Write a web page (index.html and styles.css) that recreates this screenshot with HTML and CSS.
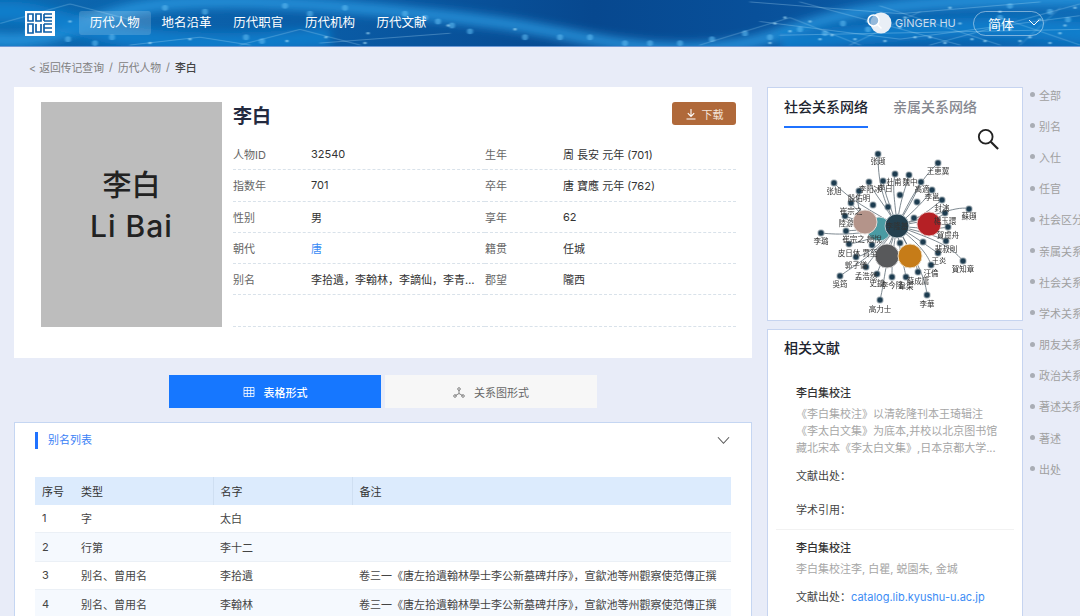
FILE: index.html
```html
<!DOCTYPE html>
<html lang="zh-CN">
<head>
    <meta charset="UTF-8">
    <meta name="viewport" content="width=device-width, initial-scale=1.0">
    <title>李白 - 历代人物</title>
    <link rel="stylesheet" href="styles.css">
</head>

<body>
    <header class="top-bar">
        <!-- network backdrop of the banner -->
        <svg class="top-bar-bg" viewBox="0 0 1080 47" preserveAspectRatio="none" aria-hidden="true">
            <defs>
                <filter id="soft" x="-10%" y="-200%" width="120%" height="500%"><feGaussianBlur stdDeviation="5"></feGaussianBlur></filter>
                <filter id="soft-small" x="-10%" y="-10%" width="120%" height="120%"><feGaussianBlur stdDeviation="0.8"></feGaussianBlur></filter>
            </defs>
            <path filter="url(#soft)" fill="none" stroke="#2b9de6" stroke-width="12" stroke-opacity=".8"
                d="M-10 40 C60 48 90 14 150 6 S300 2 400 12 S520 26 570 36 S700 60 770 38 S860 0 1090 -2"></path>
            <path filter="url(#soft)" fill="none" stroke="#1383d2" stroke-width="20" stroke-opacity=".8"
                d="M-10 12 C40 8 60 26 120 36 S240 46 330 38 M780 44 C860 36 960 20 1090 34"></path>
            <g filter="url(#soft-small)" fill="none" stroke-linecap="round">
                <path stroke="#5ab8f0" stroke-opacity=".6" stroke-width="6"
                    d="M28 32h0 M50 24h0 M68 40h0 M95 44h0 M112 38h0 M165 8h0 M205 12h0 M246 38h0 M262 42h0 M285 6h0 M310 14h0 M345 8h0 M405 14h0 M425 18h0 M438 22h0 M452 26h0 M470 32h0 M525 38h0 M560 38h0 M590 38h0 M625 44h0 M650 44h0 M680 44h0 M712 40h0 M745 34h0 M770 38h0 M800 30h0 M825 34h0 M843 24h0 M868 30h0 M1010 6h0 M1050 12h0 M1000 18h0 M1068 20h0"></path>
                <path stroke="#a3dcf8" stroke-opacity=".85" stroke-width="2.600"
                    d="M70 22h0 M150 44h0 M190 40h0 M287 42h0 M326 38h0 M368 34h0 M365 44h0 M448 26h0 M515 30h0 M770 44h0 M775 24h0 M785 18h0 M790 32h0 M810 22h0 M820 40h0 M832 36h0 M855 40h0 M868 22h0 M885 42h0 M900 28h0 M915 38h0 M930 38h0 M945 44h0 M960 24h0 M972 40h0 M985 42h0 M1010 30h0 M1030 38h0 M1050 44h0 M1065 26h0 M1000 12h0 M1040 20h0 M1075 8h0 M905 18h0 M950 8h0 M1020 42h0 M1060 34h0"></path>
                <path stroke="#b4e2fa" stroke-opacity=".45" stroke-width=".7"
                    d="M700 46 L790 18 L860 46 M760 22 L900 40 L1080 16 M800 2 L960 46 M880 6 L1000 46 M930 46 L1080 4 M1000 18 L1080 46 M750 2 L900 14 L1040 2 M780 36 L1080 30 M850 46 L920 12 M1020 46 L1060 8 M240 46 L300 30 L360 46 M130 46 L200 38 L250 46 M0 24 L70 4 L130 20 M320 44 L450 34"></path>
            </g>
        </svg>

        <svg class="logo" viewBox="0 0 30 25" aria-label="logo">
            <rect width="30" height="25" fill="#fff"></rect>
            <path fill="none" stroke="#0d5fa8" stroke-width="1.700"
                d="M3 3h5v7h-5z M11 3h5v7h-5z M3 13h5v9h-5z M11 13v8h5v-8 M19 3h8 M19 6.500h8 M19 10h8 M19 3v7 M19 13h8 M19 17h8 M19 13v8h8"></path>
        </svg>

        <nav class="main-nav">
            <a class="active">历代人物</a>
            <a>地名沿革</a>
            <a>历代职官</a>
            <a>历代机构</a>
            <a>历代文献</a>
        </nav>

        <div class="user-box">
            <svg class="avatar" viewBox="0 0 26 24">
                <circle cx="15" cy="12" r="10.500" fill="#e9eff6"></circle>
                <circle cx="7.500" cy="9.500" r="5.500" fill="#6fa3d0" fill-opacity=".7" stroke="#fff" stroke-width="1.500"></circle>
                <path d="M11.500 13.500l4 4" stroke="#fff" stroke-width="1.500"></path>
            </svg>
            <span class="user-name">GINGER HU</span>
            <div class="lang-btn">
                简体
                <svg viewBox="0 0 12 8"><path d="M1 1l5 5 5-5" fill="none" stroke="currentColor" stroke-width="1"></path></svg>
            </div>
        </div>
    </header>

    <div class="breadcrumb">
        <span>&lt; 返回传记查询</span><i>/</i><span>历代人物</span><i>/</i><b>李白</b>
    </div>

    <div class="page">
        <main class="left-col">
            <section class="profile">
                <div class="photo">
                    <div class="photo-cn">李白</div>
                    <div class="photo-en">Li Bai</div>
                </div>
                <div class="info">
                    <div class="info-head">
                        <h1>李白</h1>
                        <button class="download-btn">
                            <svg viewBox="0 0 12 12"><path d="M6 1v7M2.800 5.200L6 8.400l3.200-3.200M1.500 11h9" fill="none" stroke="#fff" stroke-width="1.100"></path></svg>
                            下载
                        </button>
                    </div>
                    <dl class="info-grid">
                        <div class="info-row"><dt>人物ID</dt><dd>32540</dd></div>
                        <div class="info-row"><dt>生年</dt><dd>周 長安 元年 (701)</dd></div>
                        <div class="info-row"><dt>指数年</dt><dd>701</dd></div>
                        <div class="info-row"><dt>卒年</dt><dd>唐 寶應 元年 (762)</dd></div>
                        <div class="info-row"><dt>性别</dt><dd>男</dd></div>
                        <div class="info-row"><dt>享年</dt><dd>62</dd></div>
                        <div class="info-row"><dt>朝代</dt><dd><a class="link">唐</a></dd></div>
                        <div class="info-row"><dt>籍贯</dt><dd>任城</dd></div>
                        <div class="info-row"><dt>别名</dt><dd>李拾遺，李翰林，李謫仙，李青蓮居士</dd></div>
                        <div class="info-row"><dt>郡望</dt><dd>隴西</dd></div>
                        <div class="info-row"></div>
                        <div class="info-row"></div>
                    </dl>
                </div>
            </section>

            <div class="view-tabs">
                <div class="view-tab active">
                    <svg viewBox="0 0 12 12"><path d="M1 1.500h10v9H1z M1 4.500h10 M1 7.500h10 M4.300 1.500v9 M7.700 1.500v9" fill="none" stroke="currentColor" stroke-width=".8"></path></svg>
                    表格形式
                </div>
                <div class="view-tab">
                    <svg viewBox="0 0 12 12"><path d="M6 4v3.500L2.500 9.500M6 7.500l3.500 2" fill="none" stroke="currentColor" stroke-width=".8"></path><circle cx="6" cy="3" r="1.300" fill="none" stroke="currentColor" stroke-width=".8"></circle><circle cx="2" cy="10" r="1.300" fill="none" stroke="currentColor" stroke-width=".8"></circle><circle cx="10" cy="10" r="1.300" fill="none" stroke="currentColor" stroke-width=".8"></circle></svg>
                    关系图形式
                </div>
            </div>

            <section class="alias-panel">
                <div class="panel-head">
                    <h2>别名列表</h2>
                    <svg viewBox="0 0 14 9"><path d="M1 1l6 6.500L13 1" fill="none" stroke="#555" stroke-width="1.100"></path></svg>
                </div>
                <table class="alias-table">
                    <thead>
                        <tr><th>序号</th><th>类型</th><th>名字</th><th>备注</th></tr>
                    </thead>
                    <tbody>
                        <tr><td>1</td><td>字</td><td>太白</td><td></td></tr>
                        <tr><td>2</td><td>行第</td><td>李十二</td><td></td></tr>
                        <tr><td>3</td><td>别名、曾用名</td><td>李拾遺</td><td>卷三一《唐左拾遺翰林學士李公新墓碑幷序》，宣歙池等州觀察使范傳正撰</td></tr>
                        <tr><td>4</td><td>别名、曾用名</td><td>李翰林</td><td>卷三一《唐左拾遺翰林學士李公新墓碑幷序》，宣歙池等州觀察使范傳正撰</td></tr>
                    </tbody>
                </table>
            </section>
        </main>

        <aside class="right-col">
            <section class="graph-card">
                <div class="graph-tabs">
                    <span class="active">社会关系网络</span>
                    <span>亲属关系网络</span>
                </div>
                <svg class="search-icon" viewBox="0 0 24 24"><circle cx="9.500" cy="9.500" r="7.500" fill="none" stroke="#222" stroke-width="2"></circle><path d="M15 15l8 8" stroke="#222" stroke-width="2.400"></path></svg>
                <svg class="graph" viewBox="0 0 250 195">
                    <path fill="none" stroke="#5d6b75" stroke-width=".8" d="M127 96C112 70 108 50 108 24M127 96C140 70 150 50 168 33M127 96C100 80 80 70 64 53M127 96C115 75 105 65 99 52M127 96C120 75 115 65 113 51M127 96C125 70 122 60 125 44M127 96C130 70 135 60 139 45M127 96C140 75 145 65 151 52M127 96C145 80 155 70 162 60M127 96C90 90 85 80 89 61M127 96C100 90 90 85 81 73M127 96C150 90 165 75 172 70M127 96C165 85 190 75 199 79M127 96C160 90 170 88 175 83M127 96C165 100 172 98 178 97M127 96C100 95 85 90 75 86M127 96C100 100 85 100 76 101M127 96C90 105 70 105 51 103M127 96C100 110 90 112 79 114M127 96C105 120 95 125 86 127M127 96C165 105 170 108 176 111M127 96C150 110 160 118 168 123M127 96C165 110 180 115 193 131M127 96C150 115 158 125 161 135M127 96C105 125 85 135 70 146M127 96C110 120 100 130 96 137M127 96C115 125 110 135 107 144M127 96C122 125 122 135 122 147M127 96C130 125 134 135 136 147M127 96C140 120 145 130 148 142M127 96C115 130 115 150 110 170M127 96C145 130 155 145 157 165"></path>
                    <g fill="#1d3c50" stroke="#8b99a3" stroke-opacity=".55" stroke-width="1.500">
                        <circle cx="108" cy="24" r="3"></circle><circle cx="168" cy="33" r="3"></circle><circle cx="64" cy="53" r="3"></circle><circle cx="99" cy="52" r="3"></circle><circle cx="113" cy="51" r="3"></circle><circle cx="125" cy="44" r="3"></circle><circle cx="139" cy="45" r="3"></circle><circle cx="151" cy="52" r="3"></circle><circle cx="162" cy="60" r="3"></circle><circle cx="89" cy="61" r="3"></circle><circle cx="81" cy="73" r="3"></circle><circle cx="172" cy="70" r="3"></circle><circle cx="199" cy="79" r="3"></circle><circle cx="175" cy="83" r="3"></circle><circle cx="178" cy="97" r="3"></circle><circle cx="75" cy="86" r="3"></circle><circle cx="76" cy="101" r="3"></circle><circle cx="51" cy="103" r="3"></circle><circle cx="79" cy="114" r="3"></circle><circle cx="86" cy="127" r="3"></circle><circle cx="176" cy="111" r="3"></circle><circle cx="168" cy="123" r="3"></circle><circle cx="193" cy="131" r="3"></circle><circle cx="161" cy="135" r="3"></circle><circle cx="70" cy="146" r="3"></circle><circle cx="96" cy="137" r="3"></circle><circle cx="107" cy="144" r="3"></circle><circle cx="122" cy="147" r="3"></circle><circle cx="136" cy="147" r="3"></circle><circle cx="148" cy="142" r="3"></circle><circle cx="110" cy="170" r="3"></circle><circle cx="157" cy="165" r="3"></circle><circle cx="130" cy="65" r="3"></circle><circle cx="147" cy="72" r="3"></circle><circle cx="118" cy="77" r="3"></circle><circle cx="103" cy="75" r="3"></circle><circle cx="144" cy="88" r="3"></circle><circle cx="153" cy="112" r="3"></circle><circle cx="102" cy="115" r="3"></circle><circle cx="130" cy="113" r="3"></circle>
                    </g>
                    <circle cx="109" cy="99" r="12" fill="#4a9ba3" stroke="#c9d8da"></circle>
                    <circle cx="95" cy="92" r="12" fill="#b4948a" stroke="#e4dad6"></circle>
                    <circle cx="127" cy="96" r="12" fill="#24404f" stroke="#bcc6cc"></circle>
                    <circle cx="159" cy="94" r="12" fill="#b52025" stroke="#e4c0c0"></circle>
                    <circle cx="117" cy="126" r="12" fill="#58595b" stroke="#cfcfd0"></circle>
                    <circle cx="140" cy="126" r="12" fill="#c67c18" stroke="#ecdcc2"></circle>
                    <g class="graph-labels">
                        <text x="108" y="34">张颋</text><text x="168" y="44">王恵翼</text><text x="64" y="64">张旭</text><text x="100" y="62">李阳冰</text><text x="115" y="61">李白</text><text x="124" y="55">杜甫</text><text x="140" y="55">魏中</text><text x="152" y="62">高適</text><text x="162" y="70">李邕</text><text x="89" y="71">殷佑明</text><text x="81" y="84">崔宗之</text><text x="172" y="81">封演</text><text x="199" y="89">蘇頲</text><text x="175" y="94">楊玉環</text><text x="178" y="108">賀虞舟</text><text x="76" y="96">陸游</text><text x="51" y="114">李璐</text><text x="92" y="112">崔宗之 趙悅</text><text x="79" y="126">皮日休</text><text x="100" y="126">賈至</text><text x="86" y="138">郭子儀</text><text x="176" y="122">裴叔則</text><text x="169" y="134">王炎</text><text x="193" y="142">賀知章</text><text x="161" y="146">汪倫</text><text x="70" y="157">吳筠</text><text x="96" y="149">孟浩然</text><text x="107" y="156">史鎮</text><text x="122" y="158">李今隆</text><text x="136" y="159">韋渠</text><text x="148" y="154">蘇成庸</text><text x="110" y="182">高力士</text><text x="157" y="177">李華</text><text x="127" y="99">李隆基</text>
                    </g>
                </svg>
            </section>

            <section class="docs-card">
                <h3>相关文献</h3>
                <div class="doc">
                    <h4>李白集校注</h4>
                    <p class="doc-desc">《李白集校注》以清乾隆刊本王琦辑注<br>《李太白文集》为底本,并校以北京图书馆<br>藏北宋本《李太白文集》,日本京都大学...</p>
                    <p class="doc-meta">文献出处：</p>
                    <p class="doc-meta">学术引用：</p>
                </div>
                <div class="doc">
                    <h4>李白集校注</h4>
                    <p class="doc-desc">李白集校注李, 白瞿, 蜕園朱, 金城</p>
                    <p class="doc-meta">文献出处：<a class="link">catalog.lib.kyushu-u.ac.jp</a></p>
                </div>
            </section>
        </aside>

        <ul class="side-rail">
            <li>全部</li>
            <li>别名</li>
            <li>入仕</li>
            <li>任官</li>
            <li>社会区分</li>
            <li>亲属关系</li>
            <li>社会关系</li>
            <li>学术关系</li>
            <li>朋友关系</li>
            <li>政治关系</li>
            <li>著述关系</li>
            <li>著述</li>
            <li>出处</li>
        </ul>
    </div>
</body>
</html>
```

FILE: styles.css
```css
* {
    box-sizing: border-box;
}
html, body {
    height: 616px;
    overflow: hidden;
}
body {
    margin: 0;
    background-color: #e8ecf8;
    color: #333;
    font-family: Inter, "Noto Sans CJK SC", sans-serif;
    font-size: 11px;
}
h1, h2, h3, h4, p, dl, dd, ul {
    margin: 0;
    padding: 0;
}

/* banner */
.top-bar {
    position: relative;
    display: flex;
    align-items: center;
    height: 47px;
    padding: 0 36px 0 25px;
    overflow: hidden;
    background: linear-gradient(90deg, #0c68b0 0%, #0a5ca6 30%, #07488f 55%, #08509a 70%, #0f6bb6 100%);
    border-bottom: 1px solid #6f9ad6;
    color: #fff;
}
.top-bar-bg {
    position: absolute;
    left: 0;
    top: 0;
    width: 100%;
    height: 100%;
}
.logo {
    position: relative;
    width: 30px;
    height: 25px;
    margin-right: 24px;
}
.main-nav {
    position: relative;
    display: flex;
}
.main-nav a {
    width: 71.700px;
    height: 24px;
    line-height: 23px;
    text-align: center;
    font-size: 12.500px;
    border-radius: 3px;
}
.main-nav a.active {
    background-color: rgba(255, 255, 255, .17);
}
.user-box {
    position: relative;
    display: flex;
    align-items: center;
    margin-left: auto;
}
.avatar {
    width: 26px;
    height: 24px;
    margin-right: 3px;
}
.user-name {
    width: 78px;
    font-size: 11px;
    color: #c9dcee;
    white-space: nowrap;
}
.lang-btn {
    display: flex;
    align-items: center;
    justify-content: space-between;
    width: 71px;
    height: 25px;
    padding: 0 3px 0 14px;
    border: 1px solid rgba(255, 255, 255, .45);
    border-radius: 13px;
    font-size: 13px;
}
.lang-btn svg {
    width: 12px;
    height: 8px;
}

.breadcrumb {
    display: flex;
    align-items: center;
    gap: 5px;
    height: 40px;
    padding-left: 29px;
    color: #808080;
    font-size: 10.800px;
}
.breadcrumb i {
    font-style: normal;
}
.breadcrumb b {
    color: #444;
    font-weight: 500;
}

.page {
    display: flex;
    align-items: flex-start;
    padding-left: 14px;
}
.left-col {
    flex: none;
    width: 738px;
    margin-right: 15px;
}
.right-col {
    flex: none;
    width: 256px;
    margin-right: 6px;
}

/* person card */
.profile {
    display: flex;
    height: 271px;
    padding: 15px 16px 0 27px;
    background-color: #fff;
}
.photo {
    flex: none;
    display: flex;
    flex-direction: column;
    align-items: center;
    justify-content: center;
    width: 181px;
    height: 225px;
    margin-right: 11px;
    padding-bottom: 17px;
    background-color: #bdbdbd;
    color: #222;
    font-weight: 500;
    line-height: 40px;
}
.photo-cn {
    font-size: 29px;
}
.photo-en {
    font-size: 30px;
    letter-spacing: 1px;
}
.info {
    flex: 1;
}
.info-head {
    display: flex;
    justify-content: space-between;
    height: 37px;
}
.info-head h1 {
    padding-top: 1px;
    font-size: 19px;
    font-weight: 600;
    line-height: 27px;
    color: #232a3f;
}
.download-btn {
    display: flex;
    align-items: center;
    justify-content: center;
    gap: 5px;
    width: 64px;
    height: 23px;
    padding: 0;
    border: none;
    border-radius: 3px;
    background-color: #b0693a;
    color: #f3e2d6;
    font-family: inherit;
    font-size: 11px;
}
.download-btn svg {
    width: 12px;
    height: 12px;
}
.info-grid {
    display: grid;
    grid-template-columns: 252px 251px;
}
.info-row {
    display: flex;
    align-items: center;
    height: 31.300px;
    border-bottom: 1px dashed #d9e2ea;
}
.info-row dt {
    flex: none;
    width: 78px;
    color: #666;
}
.info-row dd {
    flex: 1;
    min-width: 0;
    padding-right: 4px;
    color: #333;
    white-space: nowrap;
    overflow: hidden;
    text-overflow: ellipsis;
}
.link {
    color: #3b8cf5;
}

/* table / graph switch */
.view-tabs {
    display: flex;
    justify-content: center;
    gap: 4px;
    margin: 17px 0 14px;
}
.view-tab {
    display: flex;
    align-items: center;
    justify-content: center;
    gap: 9px;
    width: 212px;
    height: 33px;
    background-color: #f7f7f7;
    color: #666;
}
.view-tab.active {
    background-color: #1677ff;
    color: #fff;
    font-weight: 500;
}
.view-tab svg {
    width: 12px;
    height: 12px;
}

.alias-panel {
    padding: 0 20px;
    background-color: #fff;
    border: 1px solid #c5d6f2;
    height: 300px;
}
.panel-head {
    display: flex;
    align-items: center;
    justify-content: space-between;
    height: 34px;
    padding-right: 1px;
    margin-bottom: 20px;
}
.panel-head h2 {
    padding-left: 10px;
    border-left: 3px solid #1f72ff;
    color: #3b82f6;
    font-size: 11px;
    font-weight: 400;
    line-height: 17px;
}
.panel-head svg {
    width: 13px;
    height: 9px;
}
.alias-table {
    width: 696px;
    table-layout: fixed;
    border-collapse: collapse;
}
.alias-table th,
.alias-table td {
    padding: 0 7px;
    text-align: left;
    font-weight: 400;
    white-space: nowrap;
    overflow: hidden;
    color: #444;
}
.alias-table th {
    height: 27.500px;
    background-color: #dcebfd;
    color: #333;
}
.alias-table td {
    height: 28.400px;
    border-bottom: 1px solid #ebf0f6;
}
.alias-table th:nth-child(1) { width: 39px; }
.alias-table th:nth-child(2) { width: 139px; }
.alias-table th:nth-child(3) { width: 139px; }
.alias-table th:nth-child(n+3) {
    border-left: 1px solid #cfdff2;
}
.alias-table tbody tr:nth-child(even) {
    background-color: #f5f9fe;
}

/* right side */
.graph-card {
    position: relative;
    height: 234px;
    background-color: #fff;
    border: 1px solid #c6d4f0;
}
.graph-tabs {
    display: flex;
    gap: 25px;
    padding: 8px 0 0 16px;
    font-size: 14px;
    font-weight: 500;
    color: #85878f;
}
.graph-tabs span {
    height: 32px;
    line-height: 22px;
}
.graph-tabs .active {
    color: #20242f;
    border-bottom: 2px solid #1f72ff;
}
.search-icon {
    position: absolute;
    right: 23px;
    top: 40px;
    width: 22px;
    height: 22px;
}
.graph {
    position: absolute;
    left: 2px;
    top: 42px;
    width: 250px;
    height: 195px;
    filter: blur(.45px);
}
.graph-labels text {
    font-size: 7.500px;
    fill: #333;
    text-anchor: middle;
}
.docs-card {
    height: 300px;
    margin-top: 8px;
    padding: 7px 8px 0;
    background-color: #fff;
    border: 1px solid #c6d4f0;
}
.docs-card h3 {
    padding-left: 8px;
    font-size: 14px;
    font-weight: 500;
    line-height: 22px;
    color: #20242f;
    margin-bottom: 26px;
}
.doc {
    padding-left: 20px;
}
.doc + .doc {
    margin-top: 10px;
    padding-top: 10px;
    border-top: 1px solid #f2f2f2;
}
.doc h4 {
    font-size: 11px;
    font-weight: 500;
    line-height: 17px;
    color: #333;
}
.doc-desc {
    margin-top: 4px;
    color: #a6a6a6;
    line-height: 17px;
    white-space: nowrap;
}
.doc-meta {
    margin-top: 11px;
    line-height: 17px;
    color: #444;
    white-space: nowrap;
}
.doc-desc + .doc-meta + .doc-meta {
    margin-top: 17px;
}

.side-rail {
    flex: none;
    width: 60px;
    margin-top: -8px;
    list-style: none;
    white-space: nowrap;
    overflow: hidden;
}
.side-rail li {
    display: flex;
    align-items: center;
    height: 31.200px;
    color: #a0a0a0;
}
.side-rail li::before {
    content: "";
    width: 5px;
    height: 5px;
    margin-right: 4px;
    margin-left: 1px;
    border-radius: 50%;
    background-color: #a9adb5;
}
```
